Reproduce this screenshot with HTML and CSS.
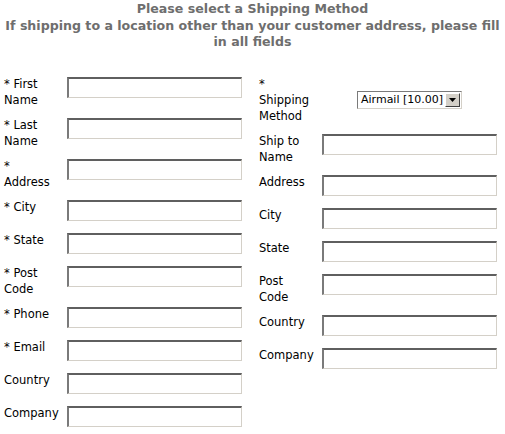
FILE: index.html
```html
<!DOCTYPE html>
<html>
<head>
<meta charset="utf-8">
<link rel="stylesheet" href="styles.css">
</head>
<body>
<div class="page">
  <h1 class="heading">Please select a Shipping Method<br>If shipping to a location other than your customer address, please fill in all fields</h1>
  <div class="columns">
    <div class="col">
      <div class="row"><div class="label">* First Name</div><div class="field"><span class="input"></span></div></div>
      <div class="row"><div class="label">* Last Name</div><div class="field"><span class="input"></span></div></div>
      <div class="row"><div class="label">* Address</div><div class="field"><span class="input"></span></div></div>
      <div class="row"><div class="label">* City</div><div class="field"><span class="input"></span></div></div>
      <div class="row"><div class="label">* State</div><div class="field"><span class="input"></span></div></div>
      <div class="row"><div class="label">* Post Code</div><div class="field"><span class="input"></span></div></div>
      <div class="row"><div class="label">* Phone</div><div class="field"><span class="input"></span></div></div>
      <div class="row"><div class="label">* Email</div><div class="field"><span class="input"></span></div></div>
      <div class="row"><div class="label">Country</div><div class="field"><span class="input"></span></div></div>
      <div class="row"><div class="label">Company</div><div class="field"><span class="input"></span></div></div>
    </div>
    <div class="col">
      <div class="row"><div class="label">* Shipping Method</div><div class="field center"><span class="select"><span class="select-text">Airmail [10.00]</span><span class="select-btn"><svg width="7" height="4" viewBox="0 0 7 4"><path d="M0 0h7L3.5 4z" fill="#000"/></svg></span></span></div></div>
      <div class="row"><div class="label">Ship to Name</div><div class="field"><span class="input"></span></div></div>
      <div class="row"><div class="label">Address</div><div class="field"><span class="input"></span></div></div>
      <div class="row"><div class="label">City</div><div class="field"><span class="input"></span></div></div>
      <div class="row"><div class="label">State</div><div class="field"><span class="input"></span></div></div>
      <div class="row"><div class="label">Post Code</div><div class="field"><span class="input"></span></div></div>
      <div class="row"><div class="label">Country</div><div class="field"><span class="input"></span></div></div>
      <div class="row"><div class="label">Company</div><div class="field"><span class="input"></span></div></div>
    </div>
  </div>
</div>
</body>
</html>
```
FILE: styles.css
```css
html, body {
  margin: 0;
  padding: 0;
  background: #fff;
}
.page {
  width: 505px;
  font-family: "DejaVu Sans", Verdana, sans-serif;
}
.heading {
  margin: 0;
  padding-top: 1px;
  font-size: 12.6px;
  line-height: 16.5px;
  font-weight: bold;
  color: #6e6e6e;
  text-align: center;
}
.columns {
  display: flex;
  gap: 17px;
  padding: 25px 0 0 4px;
}
.col {
  display: flex;
  flex-direction: column;
}
.row {
  display: flex;
  gap: 8px;
  padding-bottom: 9px;
}
.label {
  width: 55px;
  font-size: 11.5px;
  line-height: 16px;
  color: #000;
}
.field {
  width: 175px;
  min-height: 24px;
}
.field.center {
  display: flex;
  align-items: center;
  justify-content: center;
}
.input {
  display: block;
  box-sizing: border-box;
  width: 175px;
  height: 21px;
  margin-top: 1px;
  border-style: solid;
  border-width: 2px 1px 1px 2px;
  border-color: #5f5f5f #d4d0c8 #d4d0c8 #7a7a7a;
  background: #fff;
}
.select {
  display: flex;
  align-items: center;
  box-sizing: border-box;
  width: 105px;
  height: 18px;
  border: 1px solid #7a7a7a;
  border-right-color: #d4d0c8;
  border-bottom-color: #d4d0c8;
  background: #fff;
  font-size: 11px;
}
.select-text {
  flex: 1;
  padding-left: 3px;
  color: #000;
  white-space: nowrap;
}
.select-btn {
  display: flex;
  align-items: center;
  justify-content: center;
  box-sizing: border-box;
  width: 15px;
  height: 14px;
  margin-right: 1px;
  background: #d4d0c8;
  border: 1px solid;
  border-color: #fff #404040 #404040 #fff;
}
```
